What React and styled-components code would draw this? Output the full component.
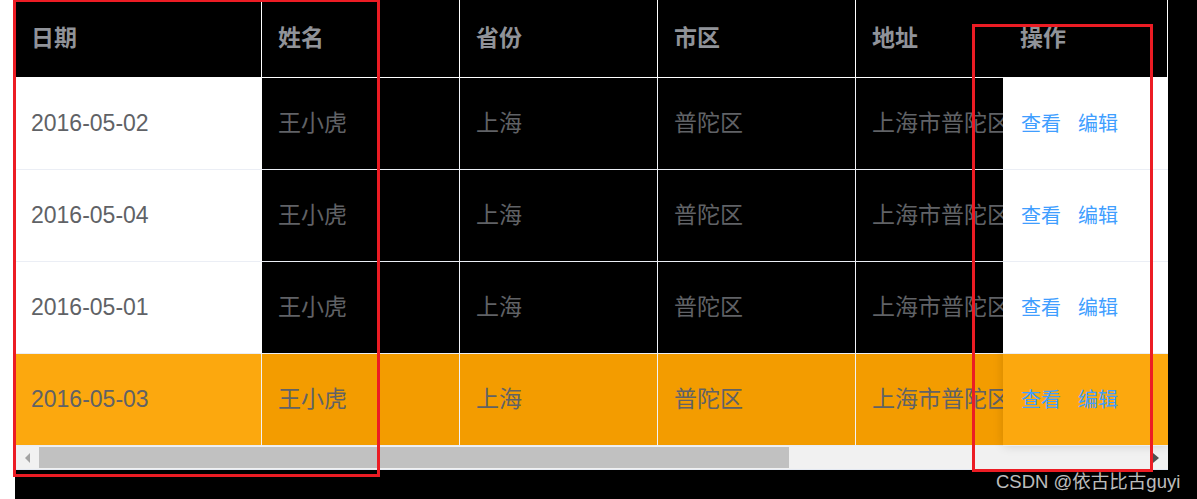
import React from "react";
import styled, { createGlobalStyle } from "styled-components";

const GlobalStyle = createGlobalStyle`
  html, body {
    margin: 0;
    padding: 0;
    background: #000;
  }
  body {
    font-family: "Liberation Sans", "Noto Sans CJK SC", sans-serif;
  }
`;

const Page = styled.div`
  position: relative;
  display: flex;
  align-items: flex-start;
  width: 1197px;
  height: 499px;
  background: #000;
  overflow: hidden;
`;

const Gutter = styled.div`
  flex-shrink: 0;
  width: 15px;
  height: 100%;
  background: #fff;
`;

const Table = styled.div`
  display: flex;
  flex-direction: column;
  width: 1153px;
`;

const TableBody = styled.div`
  display: flex;
`;

const Main = styled.div`
  display: flex;
  flex-direction: column;
  width: 988px;
`;

const Row = styled.div`
  display: grid;
  grid-template-columns: 247px 198px 198px 198px 147px;
`;

const FixedColumn = styled.div`
  position: relative;
  z-index: 2;
  display: flex;
  flex-direction: column;
  width: 165px;
  box-shadow: 0 0 10px rgba(0, 0, 0, 0.14);
`;

const HeadCell = styled.div`
  box-sizing: border-box;
  display: flex;
  align-items: center;
  height: 78px;
  padding: 0 ${(p) => p.$pad || 16}px 6px;
  background: #000;
  border-bottom: 1px solid #fff;
  border-right: ${(p) => (p.$noRight ? "none" : "1px solid #fff")};
  color: #909399;
  font-size: 23px;
  font-weight: 700;
  white-space: nowrap;
`;

const tones = {
  light: "#fff",
  dark: "#000",
  hl: "#fca80e",
  hlDark: "#f39c00",
};

const Cell = styled.div`
  box-sizing: border-box;
  display: flex;
  align-items: center;
  height: 92px;
  padding: 0 ${(p) => p.$pad || 16}px ${(p) => p.$lift || 0}px;
  background: ${(p) => tones[p.$tone]};
  border-bottom: 1px solid #ebeef5;
  border-right: ${(p) =>
    p.$noRight ? "none" : p.$tone === "light" ? "1px solid #fff" : "1px solid #f0f2f7"};
  color: #606266;
  font-size: 23px;
  white-space: nowrap;
  overflow: hidden;
`;

const LinkGroup = styled.div`
  display: flex;
  gap: 17px;
`;

const TextLink = styled.span`
  color: #409eff;
  font-size: 20px;
  cursor: pointer;
`;

const ScrollBar = styled.div`
  display: flex;
  height: 23px;
  background: #f1f1f1;
  border-bottom: 1px solid #e4e9f2;
`;

const ArrowButton = styled.div`
  flex-shrink: 0;
  display: flex;
  align-items: center;
  justify-content: center;
  width: 24px;
`;

const Arrow = styled.div`
  width: 0;
  height: 0;
  border-top: 5px solid transparent;
  border-bottom: 5px solid transparent;
  ${(p) =>
    p.$dir === "left"
      ? "border-right: 5px solid #a3a3a3;"
      : "border-left: 6px solid #505050;"}
`;

const Track = styled.div`
  flex: 1;
  display: flex;
  align-items: center;
`;

const Thumb = styled.div`
  width: 750px;
  height: 21px;
  background: #c1c1c1;
`;

const Annotation = styled.div`
  position: absolute;
  box-sizing: border-box;
  border: 3px solid #ec1c24;
  pointer-events: none;
  z-index: 5;
`;

const Watermark = styled.div`
  position: absolute;
  left: 996px;
  top: 467px;
  z-index: 6;
  color: rgba(225, 225, 225, 0.85);
  font-family: "Liberation Sans", "Noto Sans CJK SC", sans-serif;
  font-size: 18.5px;
  white-space: nowrap;
`;

const rows = [
  { date: "2016-05-02", name: "王小虎", province: "上海", city: "普陀区", address: "上海市普陀区金沙江路 1518 弄" },
  { date: "2016-05-04", name: "王小虎", province: "上海", city: "普陀区", address: "上海市普陀区金沙江路 1517 弄" },
  { date: "2016-05-01", name: "王小虎", province: "上海", city: "普陀区", address: "上海市普陀区金沙江路 1519 弄" },
  { date: "2016-05-03", name: "王小虎", province: "上海", city: "普陀区", address: "上海市普陀区金沙江路 1516 弄", current: true },
];

export default function App() {
  return (
    <>
      <GlobalStyle />
      <Page>
        <Gutter />
        <Table>
          <TableBody>
            <Main>
              <Row>
                <HeadCell>日期</HeadCell>
                <HeadCell>姓名</HeadCell>
                <HeadCell>省份</HeadCell>
                <HeadCell>市区</HeadCell>
                <HeadCell $noRight>地址</HeadCell>
              </Row>
              {rows.map((r) => {
                const light = r.current ? "hl" : "light";
                const dark = r.current ? "hlDark" : "dark";
                return (
                  <Row key={r.date}>
                    <Cell $tone={light}>{r.date}</Cell>
                    <Cell $tone={dark} $lift={6}>{r.name}</Cell>
                    <Cell $tone={dark} $lift={6}>{r.province}</Cell>
                    <Cell $tone={dark} $lift={6}>{r.city}</Cell>
                    <Cell $tone={dark} $lift={6} $noRight>{r.address}</Cell>
                  </Row>
                );
              })}
            </Main>
            <FixedColumn>
              <HeadCell $pad={17}>操作</HeadCell>
              {rows.map((r) => (
                <Cell key={r.date} $tone={r.current ? "hl" : "light"} $pad={18} $lift={2} $noRight>
                  <LinkGroup>
                    <TextLink>查看</TextLink>
                    <TextLink>编辑</TextLink>
                  </LinkGroup>
                </Cell>
              ))}
            </FixedColumn>
          </TableBody>
          <ScrollBar>
            <ArrowButton>
              <Arrow $dir="left" />
            </ArrowButton>
            <Track>
              <Thumb />
            </Track>
            <ArrowButton>
              <Arrow $dir="right" />
            </ArrowButton>
          </ScrollBar>
        </Table>
        <Annotation style={{ left: 13, top: -1, width: 367, height: 478 }} />
        <Annotation style={{ left: 972, top: 24, width: 181, height: 448 }} />
        <Watermark>CSDN @依古比古guyi</Watermark>
      </Page>
    </>
  );
}
